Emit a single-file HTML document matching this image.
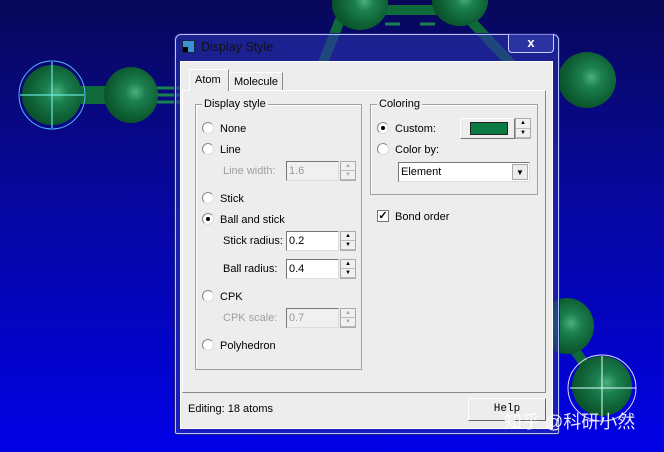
<!DOCTYPE html>
<html><head><meta charset="utf-8"><style>
*{margin:0;padding:0;box-sizing:border-box}
body{width:664px;height:452px;overflow:hidden;position:relative;background:linear-gradient(#08085a 0%,#0707a0 45%,#0000e6 100%);font-family:"Liberation Sans",sans-serif;font-size:11px;color:#000}
.a{position:absolute}
.sp{position:absolute;border-radius:50%;background:radial-gradient(circle at 58% 45%,#4cb07c 0%,#1c8050 22%,#0e6034 55%,#053a1a 100%)}
.t{position:absolute;white-space:nowrap;line-height:14px}
.g{color:#a0a0a0}
.rb{position:absolute;width:12px;height:12px;border-radius:50%;background:#fff;border:1px solid #888;border-right-color:#ddd;border-bottom-color:#ddd}
.rb.on:after{content:"";position:absolute;left:3px;top:3px;width:4px;height:4px;border-radius:50%;background:#000}
.in{position:absolute;background:#fff;border:1px solid #777;border-right-color:#ddd;border-bottom-color:#ddd;padding-left:2px;line-height:18px;font-size:11px}
.in.dis{background:#f0f0f0;color:#999}
.spn{position:absolute;width:16px;border:1px solid #aaa;background:#f0f0f0}
.spn div{height:50%;border-bottom:1px solid #bbb;font-size:6px;text-align:center;line-height:9px}
.grp{position:absolute;border:1px solid #a0a0a0;box-shadow:1px 1px 0 #fff inset}
.gl{position:absolute;top:-8px;left:6px;background:#ededed;padding:0 2px;line-height:14px}
</style></head><body>
<svg class="a" style="left:0;top:0" width="664" height="452">
<g stroke="#0f6a3a" stroke-width="10" stroke-linecap="round">
<line x1="340" y1="20" x2="300" y2="120"/><line x1="470" y1="20" x2="545" y2="100"/><line x1="360" y1="10" x2="460" y2="10"/>
<line x1="560" y1="330" x2="600" y2="385"/>
</g>
<g stroke="#1a8050" stroke-width="3"><line x1="150" y1="88" x2="180" y2="88"/><line x1="150" y1="95" x2="180" y2="95"/><line x1="150" y1="102" x2="180" y2="102"/><line x1="385" y1="24" x2="400" y2="24"/><line x1="420" y1="24" x2="435" y2="24"/></g>
<rect x="70" y="86" width="60" height="18" fill="#0f6a3a"/>
</svg>
<div class="sp" style="left:22px;top:65px;width:60px;height:60px"></div>
<div class="sp" style="left:104px;top:67px;width:54px;height:56px"></div>
<div class="sp" style="left:332px;top:-22px;width:56px;height:52px"></div>
<div class="sp" style="left:432px;top:-24px;width:56px;height:50px"></div>
<div class="sp" style="left:558px;top:52px;width:58px;height:56px"></div>
<div class="sp" style="left:540px;top:298px;width:54px;height:56px"></div>
<div class="sp" style="left:572px;top:356px;width:60px;height:60px"></div>
<svg class="a" style="left:0;top:0" width="664" height="452" fill="none" stroke="#5ab4ff" stroke-width="1">
<ellipse cx="52" cy="95" rx="33" ry="34"/><line x1="20" y1="95" x2="84" y2="95" stroke="#7ff"/><line x1="52" y1="62" x2="52" y2="128" stroke="#7ff"/>
<ellipse cx="602" cy="388" rx="34" ry="33" stroke="#dde"/><line x1="570" y1="388" x2="636" y2="388" stroke="#dff"/><line x1="602" y1="356" x2="602" y2="420" stroke="#dff"/>
</svg>
<div class="a" style="left:175px;top:34px;width:384px;height:400px;border:1px solid #b8c0ff;border-radius:6px 6px 2px 2px;background:rgba(40,50,170,0.6);box-shadow:0 0 0 1px #202080"></div>
<div class="a" style="left:182px;top:40px;width:13px;height:13px;background:#3a90d0;border:1px solid #124"></div>
<div class="a" style="left:183px;top:47px;width:5px;height:5px;background:#000"></div>
<div class="t" style="left:201px;top:40px;font-size:12.5px;color:#111">Display Style</div>
<div class="a" style="left:508px;top:34px;width:46px;height:19px;border:1px solid #c8d0ff;border-top:none;border-radius:0 0 4px 4px;background:rgba(60,70,180,0.5);color:#fff;font-weight:bold;text-align:center;line-height:17px;font-size:13px">x</div>
<div class="a" style="left:180px;top:61px;width:373px;height:368px;background:#ededed;border:1px solid #fff"></div>
<div class="a" style="left:182px;top:90px;width:364px;height:303px;border:1px solid #fff;border-right-color:#888;border-bottom-color:#888"></div>
<div class="a" style="left:189px;top:69px;width:40px;height:22px;border:1px solid #fff;border-right-color:#888;border-bottom:none;background:#ededed"></div>
<div class="t" style="left:195px;top:73px">Atom</div>
<div class="a" style="left:229px;top:72px;width:54px;height:18px;border:1px solid #fff;border-right-color:#888;border-bottom:none"></div>
<div class="t" style="left:234px;top:75px">Molecule</div>
<div class="grp" style="left:195px;top:104px;width:167px;height:266px"><span class="gl">Display style</span></div>
<div class="rb" style="left:202px;top:122px"></div><div class="t" style="left:220px;top:122px">None</div>
<div class="rb" style="left:202px;top:143px"></div><div class="t" style="left:220px;top:143px">Line</div>
<div class="t g" style="left:223px;top:164px">Line width:</div>
<div class="in dis" style="left:286px;top:161px;width:53px;height:20px">1.6</div>
<div class="spn" style="left:340px;top:161px;height:20px;color:#aaa"><div>▲</div><div>▼</div></div>
<div class="rb" style="left:202px;top:192px"></div><div class="t" style="left:220px;top:192px">Stick</div>
<div class="rb on" style="left:202px;top:213px"></div><div class="t" style="left:220px;top:213px">Ball and stick</div>
<div class="t" style="left:223px;top:234px">Stick radius:</div>
<div class="in" style="left:286px;top:231px;width:53px;height:20px">0.2</div>
<div class="spn" style="left:340px;top:231px;height:20px"><div>▲</div><div>▼</div></div>
<div class="t" style="left:223px;top:262px">Ball radius:</div>
<div class="in" style="left:286px;top:259px;width:53px;height:20px">0.4</div>
<div class="spn" style="left:340px;top:259px;height:20px"><div>▲</div><div>▼</div></div>
<div class="rb" style="left:202px;top:290px"></div><div class="t" style="left:220px;top:290px">CPK</div>
<div class="t g" style="left:223px;top:311px">CPK scale:</div>
<div class="in dis" style="left:286px;top:308px;width:53px;height:20px">0.7</div>
<div class="spn" style="left:340px;top:308px;height:20px;color:#aaa"><div>▲</div><div>▼</div></div>
<div class="rb" style="left:202px;top:339px"></div><div class="t" style="left:220px;top:339px">Polyhedron</div>
<div class="grp" style="left:370px;top:104px;width:168px;height:91px"><span class="gl">Coloring</span></div>
<div class="rb on" style="left:377px;top:122px"></div><div class="t" style="left:395px;top:122px">Custom:</div>
<div class="a" style="left:460px;top:118px;width:55px;height:21px;border:1px solid #fff;border-right-color:#777;border-bottom-color:#777;background:#ededed"></div>
<div class="a" style="left:470px;top:122px;width:38px;height:13px;background:#0b7a42;border:1px solid #222"></div>
<div class="spn" style="left:515px;top:118px;height:21px"><div>▲</div><div>▼</div></div>
<div class="rb" style="left:377px;top:143px"></div><div class="t" style="left:395px;top:143px">Color by:</div>
<div class="in" style="left:398px;top:162px;width:132px;height:20px">Element</div>
<div class="a" style="left:512px;top:164px;width:16px;height:16px;background:#ededed;border:1px solid #aaa;font-size:8px;text-align:center;line-height:15px">▼</div>
<div class="a" style="left:377px;top:210px;width:12px;height:12px;background:#fff;border:1px solid #777;font-size:11px;line-height:10px;text-align:center;font-weight:bold">✓</div>
<div class="t" style="left:395px;top:210px">Bond order</div>
<div class="t" style="left:188px;top:402px">Editing: 18 atoms</div>
<div class="a" style="left:468px;top:398px;width:78px;height:23px;border:1px solid #fff;border-right-color:#666;border-bottom-color:#666;font-family:'Liberation Mono',monospace;font-size:11px;text-align:center;line-height:21px">Help</div>
<div class="t" style="left:504px;top:411px;color:#fff;font-family:'Liberation Sans','Noto Sans CJK SC',sans-serif;font-size:18px;line-height:22px;opacity:.9">知乎 @科研小然</div>
</body></html>
